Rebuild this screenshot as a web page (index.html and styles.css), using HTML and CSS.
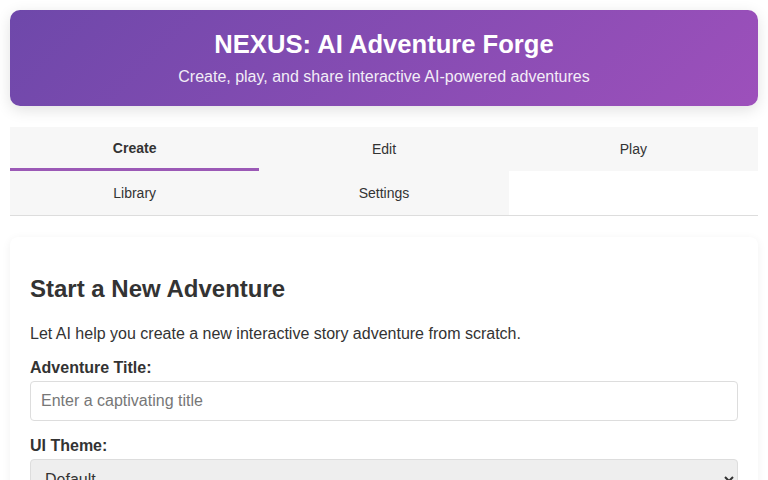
FILE: index.html
```html
<!DOCTYPE html>
<html lang="en">
<head>
<meta charset="utf-8">
<title>NEXUS: AI Adventure Forge</title>
<link rel="stylesheet" href="styles.css">
</head>
<body>
<header class="hero">
  <h1 class="hero-title">NEXUS: AI Adventure Forge</h1>
  <p class="hero-sub">Create, play, and share interactive AI-powered adventures</p>
</header>
<nav class="tabs">
  <div class="tab active">Create</div>
  <div class="tab">Edit</div>
  <div class="tab">Play</div>
  <div class="tab">Library</div>
  <div class="tab">Settings</div>
</nav>
<main class="card">
  <h2 class="card-title">Start a New Adventure</h2>
  <p class="card-text">Let AI help you create a new interactive story adventure from scratch.</p>
  <div class="form-group">
    <label class="label" for="title">Adventure Title:</label>
    <input class="input" id="title" type="text" placeholder="Enter a captivating title">
  </div>
  <div class="form-group">
    <label class="label" for="theme">UI Theme:</label>
    <select class="select" id="theme">
      <option>Default</option>
    </select>
  </div>
</main>
</body>
</html>
```
FILE: styles.css
```css
* { box-sizing: border-box; }
html, body { margin: 0; }
body {
  padding: 10px;
  font-family: "Liberation Sans", Arial, sans-serif;
  color: #333;
  background: #fff;
}
.hero {
  background: linear-gradient(135deg, #6e48aa, #9d50bb);
  color: #fff;
  border-radius: 10px;
  padding: 19px 20px 20px;
  text-align: center;
  box-shadow: 0 4px 15px rgba(0, 0, 0, 0.12);
  margin-bottom: 21px;
}
.hero-title {
  margin: 0;
  font-size: 25.6px;
  line-height: 30px;
  font-weight: bold;
}
.hero-sub {
  margin: 9px 0 0;
  font-size: 16px;
  line-height: 18px;
  opacity: 0.9;
}
.tabs {
  display: flex;
  flex-wrap: wrap;
  border-bottom: 1px solid #ddd;
  margin-bottom: 21px;
}
.tab {
  width: 33.3333%;
  background: #f7f7f7;
  text-align: center;
  font-size: 14px;
  line-height: 17px;
  padding: 14px 10px 10px;
  border-bottom: 3px solid transparent;
  color: #333;
}
.tab.active {
  font-weight: bold;
  border-bottom-color: #9b59b6;
  padding-top: 13px;
  padding-bottom: 11px;
}
.card {
  background: #fff;
  border-radius: 8px;
  padding: 20px;
  box-shadow: 0 2px 10px rgba(0, 0, 0, 0.06);
}
.card-title {
  margin: 18px 0 22px;
  font-size: 24px;
  font-weight: bold;
  color: #333;
}
.card-text {
  margin: 0 0 16px;
  font-size: 16px;
}
.form-group { margin-bottom: 16px; }
.label {
  display: block;
  font-weight: bold;
  font-size: 16px;
  margin-bottom: 4px;
}
.input, .select {
  display: block;
  width: 100%;
  height: 40px;
  padding: 10px;
  font-family: "Liberation Sans", Arial, sans-serif;
  font-size: 16px;
  border: 1px solid #ddd;
  border-radius: 4px;
  color: #333;
  background: #fff;
}
.input::placeholder { color: #777; }
.select { background: #eee; }
```
